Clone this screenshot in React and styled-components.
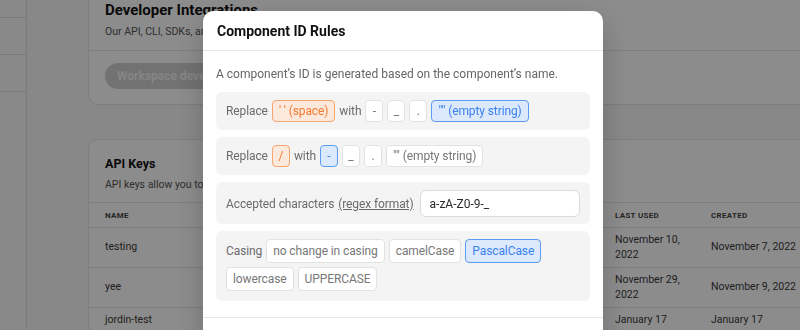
import React from 'react';
import styled, { createGlobalStyle, css } from 'styled-components';

const GlobalStyle = createGlobalStyle`
  * { box-sizing: border-box; }
  html, body { margin: 0; padding: 0; overflow: hidden; }
  body {
    font-family: Roboto, Inter, "Liberation Sans", sans-serif;
    background: #f7f7f8;
    color: #222;
  }
`;

const Page = styled.div`
  display: flex;
  height: 330px;
  overflow: hidden;
  background: #f7f7f8;
`;

const Sidebar = styled.aside`
  width: 27px;
  flex-shrink: 0;
  border-right: 1px solid #e0e0e0;
  background: #f9f9f9;
  padding-top: 17px;
  display: flex;
  flex-direction: column;
`;

const SideItem = styled.div`
  height: 37px;
  border-top: 1px solid #e0e0e0;
`;

const Main = styled.main`
  flex: 1;
  padding-left: 61px;
  margin-top: -18px;
  display: flex;
  flex-direction: column;
  gap: 34px;
`;

const Card = styled.section`
  width: 760px;
  flex-shrink: 0;
  background: #fff;
  border: 1px solid #e3e3e3;
  border-radius: 10px;
`;

const CardHead = styled.div`
  padding: ${(p) => (p.$big ? '16px 16px 9px' : '14px 16px 8px')};
  border-bottom: 1px solid #e6e6e6;
`;

const CardTitle = styled.h2`
  margin: 0;
  font-size: ${(p) => (p.$big ? '15px' : '12.5px')};
  line-height: ${(p) => (p.$big ? '22px' : '20px')};
  font-weight: 700;
  color: #111;
`;

const CardDesc = styled.p`
  margin: 2px 0 0;
  font-size: 10.5px;
  line-height: 18px;
  color: #555;
`;

const CardActions = styled.div`
  padding: 12px 16px 15px;
`;

const PillButton = styled.button`
  height: 26px;
  padding: 0 12px;
  border: none;
  border-radius: 13px;
  background: #cfcfcf;
  color: #f2f2f2;
  font-family: inherit;
  font-size: 12px;
  font-weight: 700;
`;

const Table = styled.div`
  display: grid;
  grid-template-columns: 526px 96px 1fr;
`;

const HeadCell = styled.div`
  height: 25px;
  padding-left: 16px;
  display: flex;
  align-items: center;
  font-size: 8px;
  font-weight: 700;
  letter-spacing: 0.3px;
  text-transform: uppercase;
  color: #444;
  border-bottom: 1px solid #e6e6e6;
  &:nth-child(3n + 2), &:nth-child(3n) { padding-left: 0; }
`;

const Cell = styled.div`
  padding: 5px 16px;
  display: flex;
  align-items: center;
  font-size: 10.5px;
  line-height: 14.5px;
  color: #3a3a3a;
  border-bottom: 1px solid #e6e6e6;
  &:nth-child(3n + 2), &:nth-child(3n) { padding-left: 0; }
`;

const Overlay = styled.div`
  position: fixed;
  inset: 0;
  background: rgba(0, 0, 0, 0.45);
  display: flex;
  justify-content: center;
  align-items: flex-start;
  padding: 11px 0 0 6px;
`;

const Modal = styled.div`
  width: 400px;
  background: #fff;
  border-radius: 10px;
  box-shadow: 0 10px 30px rgba(0, 0, 0, 0.2);
`;

const ModalHead = styled.div`
  height: 40px;
  padding: 0 14px;
  display: flex;
  align-items: center;
  border-bottom: 1px solid #e6e6e6;
`;

const ModalTitle = styled.h3`
  margin: 0;
  font-size: 14px;
  font-weight: 700;
  color: #111;
`;

const ModalBody = styled.div`
  padding: 14px 13px 16px;
  border-bottom: 1px solid #e6e6e6;
`;

const Intro = styled.p`
  margin: 0 0 9px;
  font-size: 12px;
  line-height: 18px;
  color: #666;
`;

const Rules = styled.div`
  display: flex;
  flex-direction: column;
  gap: 7px;
`;

const Rule = styled.div`
  display: flex;
  flex-wrap: wrap;
  align-items: center;
  gap: ${(p) => p.$gap || '4px'};
  padding: 8px 10px ${(p) => p.$bottom || '8px'};
  background: #f4f4f4;
  border-radius: 6px;
  font-size: 12px;
  letter-spacing: -0.1px;
  color: #6b6b6b;
`;

const Label = styled.span`
  line-height: 18px;
`;

const RegexLink = styled.a`
  color: #6b6b6b;
  text-decoration: underline;
  margin-left: 4px;
`;

const variants = {
  neutral: css`
    background: #fff;
    border-color: #e2e2e2;
    color: #777;
  `,
  orange: css`
    background: #fde9dc;
    border-color: #f6a470;
    color: #f27a30;
  `,
  blue: css`
    background: #dce9fd;
    border-color: #5c9bf4;
    color: #3b82f0;
  `,
};

const Chip = styled.button`
  height: ${(p) => (p.$tall ? '24px' : '22px')};
  min-width: 18px;
  padding: 0 ${(p) => (p.$tight ? '5px' : '6px')};
  border: 1px solid;
  border-radius: 4px;
  font-family: inherit;
  font-size: 12px;
  letter-spacing: -0.1px;
  line-height: 1;
  cursor: pointer;
  ${(p) => variants[p.$variant || 'neutral']}
`;

const RegexInput = styled.input`
  flex: 1;
  min-width: 0;
  height: 27px;
  padding: 0 9px;
  border: 1px solid #dcdcdc;
  border-radius: 6px;
  background: #fff;
  font-family: inherit;
  font-size: 12px;
  color: #2a2a2a;
  outline: none;
`;

const ModalFoot = styled.div`
  height: 40px;
`;

const keys = [
  { name: 'testing', used: 'November 10, 2022', created: 'November 7, 2022' },
  { name: 'yee', used: 'November 29, 2022', created: 'November 9, 2022' },
  { name: 'jordin-test', used: 'January 17', created: 'January 17' },
];

const casings = ['no change in casing', 'camelCase', 'PascalCase', 'lowercase', 'UPPERCASE'];

export default function App() {
  return (
    <>
      <GlobalStyle />
      <Page>
        <Sidebar>
          <SideItem />
          <SideItem />
          <SideItem />
        </Sidebar>
        <Main>
          <Card>
            <CardHead $big>
              <CardTitle $big>Developer Integrations</CardTitle>
              <CardDesc>
                Our API, CLI, SDKs, and plugins let developers connect their workspace directly to their repositories.
              </CardDesc>
            </CardHead>
            <CardActions>
              <PillButton>Workspace developer settings</PillButton>
            </CardActions>
          </Card>
          <Card>
            <CardHead>
              <CardTitle>API Keys</CardTitle>
              <CardDesc>API keys allow you to access your workspace programmatically.</CardDesc>
            </CardHead>
            <Table>
              <HeadCell>Name</HeadCell>
              <HeadCell>Last used</HeadCell>
              <HeadCell>Created</HeadCell>
              {keys.map((k) => (
                <React.Fragment key={k.name}>
                  <Cell>{k.name}</Cell>
                  <Cell>{k.used}</Cell>
                  <Cell>{k.created}</Cell>
                </React.Fragment>
              ))}
            </Table>
          </Card>
        </Main>
      </Page>

      <Overlay>
        <Modal>
          <ModalHead>
            <ModalTitle>Component ID Rules</ModalTitle>
          </ModalHead>
          <ModalBody>
            <Intro>A component’s ID is generated based on the component’s name.</Intro>
            <Rules>
              <Rule>
                <Label>Replace</Label>
                <Chip $variant="orange">' ' (space)</Chip>
                <Label>with</Label>
                <Chip $tight>-</Chip>
                <Chip $tight>_</Chip>
                <Chip $tight>.</Chip>
                <Chip $variant="blue">"" (empty string)</Chip>
              </Rule>
              <Rule>
                <Label>Replace</Label>
                <Chip $variant="orange" $tight>/</Chip>
                <Label>with</Label>
                <Chip $variant="blue" $tight>-</Chip>
                <Chip $tight>_</Chip>
                <Chip $tight>.</Chip>
                <Chip>"" (empty string)</Chip>
              </Rule>
              <Rule $gap="6px" $bottom="7px">
                <Label>
                  Accepted characters
                  <RegexLink>(regex format)</RegexLink>
                </Label>
                <RegexInput defaultValue="a-zA-Z0-9-_" />
              </Rule>
              <Rule $bottom="10px">
                <Label>Casing</Label>
                {casings.map((c) => (
                  <Chip key={c} $tall $variant={c === 'PascalCase' ? 'blue' : 'neutral'}>
                    {c}
                  </Chip>
                ))}
              </Rule>
            </Rules>
          </ModalBody>
          <ModalFoot />
        </Modal>
      </Overlay>
    </>
  );
}
